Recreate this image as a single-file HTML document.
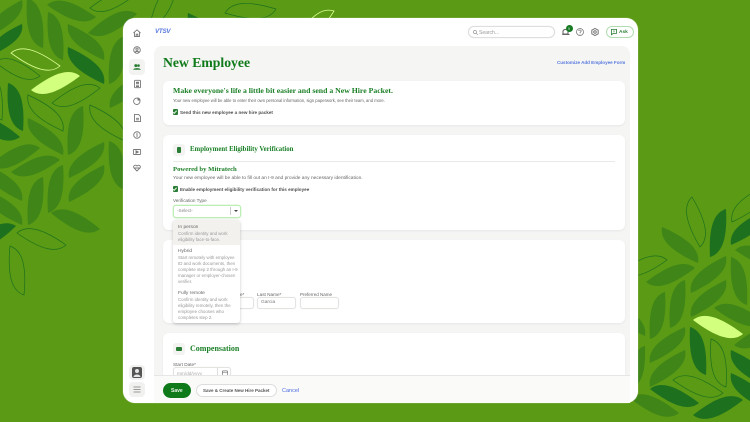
<!DOCTYPE html>
<html><head><meta charset="utf-8"><title>New Employee</title>
<style>
html,body{margin:0;padding:0;width:750px;height:422px;overflow:hidden;background:#5a9a14}
body{position:relative;font-family:"Liberation Sans",sans-serif}
.a{position:absolute;box-sizing:border-box}
.t{position:absolute;white-space:nowrap;line-height:8px;font-size:5px;color:#555}
.s{font-family:"Liberation Serif",serif;font-weight:700;color:#1a7f26}
.b{font-weight:700}
.c{position:absolute;left:163px;width:462px;background:#fff;border-radius:6px;box-shadow:0 1px 2px rgba(0,0,0,.06)}
.i{position:absolute;background:#fff;border:1px solid #e3e3e0;border-radius:3px;box-sizing:border-box;box-shadow:0 0 1px rgba(0,0,0,.1)}
.k{position:absolute;width:5.500px;height:5.500px;left:172.700px;background:#2a7d34;border-radius:1px}
.k::after{content:"";position:absolute;left:1.800px;top:.6px;width:1.300px;height:2.600px;border:solid #e8f4e8;border-width:0 .7px .7px 0;transform:rotate(45deg)}
svg.ic{position:absolute;fill:none;stroke:#777;stroke-width:.9;overflow:visible}
.d{color:#999;font-size:4.400px}
</style></head><body>
<svg class="a" style="left:0;top:0" width="750" height="422" viewBox="0 0 750 422">
<defs>
<path id="a" vector-effect="non-scaling-stroke" d="M0 0C.14-.2 .44-.22 1 0 .86.2 .56.22 0 0Z"/>
<path id="b" vector-effect="non-scaling-stroke" d="M0 0C.14.2 .44.22 1 0 .86-.2 .56-.22 0 0Z"/>
</defs>
<g fill="#3f8518">
<use href="#a" transform="matrix(32 -36 36 32 -10 36)"/>
<use href="#a" transform="matrix(16 50 -50 16 27 -2)"/>
<use href="#a" transform="matrix(15 48 -48 15 48 12)"/>
<use href="#a" transform="matrix(49 12 -12 49 47 5)"/>
<use href="#b" transform="matrix(36 36 -36 36 68 24)"/>
<use href="#b" transform="matrix(49 -19 19 49 88 33)"/>
<use href="#b" transform="matrix(16 -48 48 16 109 84)"/>
<use href="#b" transform="matrix(35 37 -37 35 28 118)"/>
<use href="#b" transform="matrix(15 -49 49 15 68 155)"/>
<use href="#b" transform="matrix(50 -17 17 50 -10 165)"/>
<use href="#b" transform="matrix(49 -12 12 49 11 172)"/>
<use href="#a" transform="matrix(35 -36 36 35 69 178)"/>
<use href="#a" transform="matrix(35 -37 37 35 69 202)"/>
<use href="#b" transform="matrix(15 -48 48 15 48 213)"/>
<use href="#b" transform="matrix(35 36 -36 35 -13 165)"/>
<use href="#b" transform="matrix(35 35 -35 35 -13 190)"/>
<use href="#b" transform="matrix(15 -48 48 15 28 225)"/>
<use href="#a" transform="matrix(49 16 -16 49 51 213)"/>
<use href="#a" transform="matrix(16 49 -49 16 109 141)"/>
<use href="#a" transform="matrix(35 -36 36 35 110 108)"/>
<use href="#b" transform="matrix(36 36 -36 36 662 227)"/>
<use href="#b" transform="matrix(49 -14 14 49 646 282)"/>
<use href="#a" transform="matrix(35 -37 37 35 691 293)"/>
<use href="#a" transform="matrix(35 -37 37 35 691 317)"/>
<use href="#a" transform="matrix(16 48 -48 16 731 257)"/>
<use href="#b" transform="matrix(15 -48 48 15 670 328)"/>
<use href="#b" transform="matrix(15 -47 47 15 650 339)"/>
<use href="#a" transform="matrix(35 -36 36 35 650 363)"/>
<use href="#a" transform="matrix(35 -37 37 35 650 387)"/>
<use href="#a" transform="matrix(51 14 -14 51 714 308)"/>
<use href="#a" transform="matrix(49 15 -15 49 630 398)"/>
<use href="#a" transform="matrix(50 12 -12 50 735 250)"/>
<use href="#b" transform="matrix(46 -15 15 46 734 345)"/>
<use href="#b" transform="matrix(15 -43 43 15 630 389)"/>
<use href="#b" transform="matrix(35 36 -36 35 610 300)"/>
</g>
<g fill="#1d701e">
<use href="#a" transform="matrix(30 -31 31 30 -8 55)"/>
<use href="#b" transform="matrix(36 37 -37 36 68 47)"/>
<use href="#a" transform="matrix(15 48 -48 15 8 83)"/>
<use href="#a" transform="matrix(50 17 -17 50 -30 120)"/>
<use href="#b" transform="matrix(46 -19 19 46 -30 245)"/>
<use href="#b" transform="matrix(37 37 -37 37 188 13)"/>
<use href="#b" transform="matrix(16 -48 48 16 710 257)"/>
<use href="#a" transform="matrix(16 48 -48 16 690 327)"/>
<use href="#b" transform="matrix(36 37 -37 36 731 350)"/>
<use href="#b" transform="matrix(36 37 -37 36 731 373)"/>
<use href="#a" transform="matrix(49 14 -14 49 650 389)"/>
<use href="#b" transform="matrix(50 -15 15 50 693 415)"/>
<use href="#a" transform="matrix(35 -35 35 35 731 245)"/>
</g>
<g fill="none" stroke="#1d701e" stroke-width=".7">
<use href="#a" transform="matrix(45 14 -14 45 -5 62)"/>
<use href="#b" transform="matrix(48 -15 15 48 52 103)"/>
<use href="#a" transform="matrix(15 48 -48 15 -13 72)"/>
<use href="#b" transform="matrix(35 36 -36 35 28 95)"/>
<use href="#b" transform="matrix(35 36 -36 35 90 105)"/>
<use href="#a" transform="matrix(49 12 -12 49 17 233)"/>
<use href="#a" transform="matrix(14 49 -49 14 10 246)"/>
<use href="#b" transform="matrix(45 -13 13 45 90 8)"/>
<use href="#b" transform="matrix(28 -40 40 28 150 24)"/>
<use href="#a" transform="matrix(51 -4 4 51 225 13)"/>
<use href="#b" transform="matrix(8 50 -50 8 692 197)"/>
<use href="#b" transform="matrix(47 -12 12 47 620 272)"/>
<use href="#a" transform="matrix(15 48 -48 15 711 339)"/>
<use href="#a" transform="matrix(50 13 -13 50 673 380)"/>
<use href="#a" transform="matrix(35 -37 37 35 732 222)"/>
</g>
<g fill="none" stroke="#dcff96" stroke-width=".8">
<use href="#a" transform="matrix(49 13 -13 49 11 53)"/>
<use href="#b" transform="matrix(39 -29 29 39 295 40)"/>
</g>
<g fill="#d2ff7e">
<use href="#b" transform="matrix(49 -14 14 49 31 90)"/>
<use href="#a" transform="matrix(50 14 -14 50 693 320)"/>
</g>
</svg>

<!-- app shell -->
<div class="a" style="left:123px;top:18px;width:515px;height:385px;background:#fff;border-radius:12px;box-shadow:0 0 1px rgba(255,255,255,.7)"></div>
<div class="a" style="left:154px;top:46px;width:476px;height:357px;background:#f5f5f4;border-radius:8px 8px 0 0"></div>

<!-- sidebar -->
<div class="a" style="left:129px;top:59px;width:16px;height:16px;background:#f3f3f1;border-radius:4px"></div>
<svg class="ic" style="left:133px;top:29px" width="8" height="8" viewBox="0 0 8 8"><path d="M.5 4 4 .8 7.500 4M1.500 3.500V7.500H6.500V3.500M3.200 7.500V5.200H4.800V7.500"/></svg>
<svg class="ic" style="left:133px;top:46px" width="8" height="8" viewBox="0 0 8 8"><circle cx="4" cy="4" r="3.300"/><circle cx="4" cy="3.200" r="1.100"/><path d="M2 6.500C2.500 5 5.500 5 6 6.500"/></svg>
<svg class="ic" style="left:133px;top:63px" width="8" height="8" viewBox="0 0 8 8"><g fill="#2a7d34" stroke="none"><circle cx="2.800" cy="2.600" r="1.500"/><circle cx="5.500" cy="2.600" r="1.300"/><path d="M.2 6.800C.4 4.500 7.600 4.500 7.800 6.800Z"/></g></svg>
<svg class="ic" style="left:134px;top:80px" width="7" height="8" viewBox="0 0 7 8"><rect x=".5" y=".3" width="6" height="7.400" rx=".8"/><rect x="2" y="1.800" width="3" height="2" fill="#777" stroke="none"/><path d="M2 5.200H5M2 6.500H5"/></svg>
<svg class="ic" style="left:133px;top:97px" width="8" height="8" viewBox="0 0 8 8"><circle cx="3.800" cy="4.300" r="3.200"/><path d="M4.500 .5A3 3 0 0 1 7.500 3.500H4.500Z" fill="#777" stroke="none"/></svg>
<svg class="ic" style="left:134px;top:114px" width="7" height="8" viewBox="0 0 7 8"><path d="M.5.4H4.500L6.500 2.400V7.600H.5ZM2 4.300H5M2 5.800H5"/></svg>
<svg class="ic" style="left:133px;top:131px" width="8" height="8" viewBox="0 0 8 8"><circle cx="4" cy="4" r="3.300"/><path d="M4 1.800V6.200"/></svg>
<svg class="ic" style="left:133px;top:148px" width="8" height="8" viewBox="0 0 8 8"><rect x=".4" y="1.500" width="7.200" height="5" rx=".6"/><path d="M3 2.800 5.300 4 3 5.200Z" fill="#777"/></svg>
<svg class="ic" style="left:133px;top:164px" width="8" height="8" viewBox="0 0 8 8"><path d="M4 7 .9 3.800C-.3 1.800 2.600 .2 4 2 5.400 .2 8.300 1.800 7.100 3.800ZM1.500 4H6.500"/></svg>
<div class="a" style="left:129px;top:365px;width:16px;height:15px;background:#f1f1ef;border-radius:4px"></div>
<svg class="a" style="left:132px;top:367px" width="10" height="11" viewBox="0 0 10 11"><rect width="10" height="11" rx="2" fill="#555"/><circle cx="5" cy="4" r="2" fill="#e5e5e5"/><path d="M1.500 10C1.800 6.700 8.200 6.700 8.500 10Z" fill="#e5e5e5"/></svg>
<div class="a" style="left:129px;top:382px;width:16px;height:15px;background:#f1f1ef;border-radius:4px"></div>
<svg class="ic" style="left:133px;top:386px;stroke:#999" width="8" height="7" viewBox="0 0 8 7"><path d="M.5 1H7.500M.5 3.500H7.500M.5 6H7.500"/></svg>

<!-- logo -->
<div class="t b" style="left:155px;top:28px;font-size:6.200px;font-style:italic;color:#5577dd;letter-spacing:-.2px">VTSV</div>

<!-- top bar -->
<div class="a" style="left:468px;top:26px;width:87px;height:12px;background:#fff;border:1px solid #dedede;border-radius:6px;box-shadow:0 0 1px rgba(0,0,0,.12)"></div>
<svg class="ic" style="left:473px;top:29.500px;stroke:#888;stroke-width:.6" width="5" height="5" viewBox="0 0 5 5"><circle cx="2" cy="2" r="1.600"/><path d="M3.200 3.200 4.800 4.800"/></svg>
<div class="t" style="left:479px;top:28.500px;color:#999">Search...</div>
<svg class="ic" style="left:562px;top:28px;stroke:#666" width="8" height="8" viewBox="0 0 8 8"><path d="M1 6V3.500C1 .8 6 .8 6 3.500V6ZM.2 6.500H7.500" stroke-width="1.100"/></svg>
<div class="a" style="left:565.500px;top:25px;width:7px;height:7px;background:#157a22;border-radius:50%"></div>
<div class="t" style="left:568px;top:24.500px;font-size:3.500px;color:#cfe8cf">9</div>
<svg class="ic" style="left:576px;top:28px;stroke-width:.8" width="8" height="8" viewBox="0 0 8 8"><circle cx="4" cy="4" r="3.500"/><path d="M2.800 3C2.800 1.700 5.200 1.700 5.200 3 5.200 3.900 4 3.900 4 5M4 5.800V6.500"/></svg>
<svg class="ic" style="left:591px;top:28px;stroke-width:1" width="8" height="8" viewBox="0 0 8 8"><path d="M4 .4 7.200 2.200V5.800L4 7.600 .8 5.800V2.200Z"/><circle cx="4" cy="4" r="1.300"/></svg>
<div class="a" style="left:606px;top:26px;width:28px;height:12px;background:#fff;border:1px solid #b0dcb0;border-radius:6px"></div>
<svg class="ic" style="left:611px;top:29px;stroke:#2a7d34;stroke-width:.8" width="6" height="6" viewBox="0 0 6 6"><path d="M.4.4H5.600V4.400H2.200L.4 5.700ZM3 1.400V3M3 3.500V3.900"/></svg>
<div class="t b" style="left:619px;top:29px;color:#2a7d34;font-size:4.800px">Ask</div>

<!-- heading -->
<div class="t s" style="left:163px;top:55px;font-size:13.700px;line-height:16px;color:#0f7a1a">New Employee</div>
<div class="t b" style="left:557px;top:59px;color:#5577dd;font-size:4.560px">Customize Add Employee Form</div>

<!-- card 1 -->
<div class="c" style="top:81px;height:44px"></div>
<div class="t s" style="left:173px;top:87px;font-size:7.750px">Make everyone's life a little bit easier and send a New Hire Packet.</div>
<div class="t" style="left:173px;top:96.500px;font-size:4.200px;color:#666">Your new employee will be able to enter their own personal information, sign paperwork, see their team, and more.</div>
<div class="k" style="top:109px"></div>
<div class="t b" style="left:180px;top:108.500px;color:#505050;font-size:4.600px">Send this new employee a new hire packet</div>

<!-- card 2 -->
<div class="c" style="top:135px;height:95px"></div>
<div class="a" style="left:173px;top:144px;width:12px;height:12px;background:#f3f3f1;border-radius:3px"></div>
<div class="a" style="left:177px;top:147px;width:4px;height:6px;background:#2a7d34;border-radius:1px"></div>
<div class="t s" style="left:190px;top:146px;font-size:6.800px">Employment Eligibility Verification</div>
<div class="a" style="left:173px;top:161px;width:442px;height:1px;background:#e9e9e7"></div>
<div class="t s" style="left:173px;top:166px;font-size:6.700px">Powered by Mitratech</div>
<div class="t" style="left:173px;top:174.500px;font-size:4.850px;color:#666">Your new employee will be able to fill out an I-9 and provide any necessary identification.</div>
<div class="k" style="top:186.300px"></div>
<div class="t b" style="left:180px;top:185.500px;color:#505050;font-size:4.580px">Enable employment eligibility verification for this employee</div>
<div class="t" style="left:173px;top:197px;color:#666;font-size:4.600px">Verification Type</div>
<div class="a" style="left:173px;top:205px;width:68px;height:12.500px;background:#fff;border:1px solid #bdeeb5;border-radius:3px;box-shadow:0 0 0 .5px #d5f5cf"></div>
<div class="t" style="left:177px;top:207px;color:#888;font-size:4.600px">-Select-</div>
<div class="a" style="left:230px;top:207px;width:1px;height:8px;background:#ccc"></div>
<div class="a" style="left:234px;top:210px;width:0;height:0;border-left:2px solid transparent;border-right:2px solid transparent;border-top:2.500px solid #444"></div>

<!-- card 3 -->
<div class="c" style="top:240px;height:83px"></div>
<div class="t" style="left:240px;top:290.500px;color:#666;font-size:4.600px">e*</div>
<div class="i" style="left:225px;top:297px;width:29px;height:12px"></div>
<div class="t" style="left:257px;top:290.500px;color:#666;font-size:4.700px">Last Name*</div>
<div class="i" style="left:257px;top:297px;width:39px;height:12px"></div>
<div class="t" style="left:261px;top:299px;color:#777;font-size:4.800px">Garcia</div>
<div class="t" style="left:300px;top:290.500px;color:#666;font-size:4.500px">Preferred Name</div>
<div class="i" style="left:300px;top:297px;width:39px;height:12px"></div>

<!-- dropdown -->
<div class="a" style="left:173px;top:220px;width:67px;height:103px;background:#fff;border-radius:3px;box-shadow:0 1px 3px rgba(0,0,0,.22)"></div>
<div class="a" style="left:173px;top:220px;width:67px;height:25px;background:#f2f1ee;border-radius:3px 3px 0 0"></div>
<div class="t" style="left:178px;top:224px;font-size:4.900px;color:#666">In person</div>
<div class="t d" style="left:178px;top:230px">Confirm identity and work</div>
<div class="t d" style="left:178px;top:236px">eligibility face-to-face.</div>
<div class="t" style="left:178px;top:248px;font-size:4.900px;color:#666">Hybrid</div>
<div class="t d" style="left:178px;top:254px">Start remotely with employee</div>
<div class="t d" style="left:178px;top:260px">ID and work documents, then</div>
<div class="t d" style="left:178px;top:266px">complete step 2 through an I-9</div>
<div class="t d" style="left:178px;top:272px">manager or employer-chosen</div>
<div class="t d" style="left:178px;top:278px">verifier.</div>
<div class="t" style="left:178px;top:290px;font-size:4.900px;color:#666">Fully remote</div>
<div class="t d" style="left:178px;top:296px">Confirm identity and work</div>
<div class="t d" style="left:178px;top:302px">eligibility remotely, then the</div>
<div class="t d" style="left:178px;top:308px">employee chooses who</div>
<div class="t d" style="left:178px;top:313.500px">completes step 2.</div>

<!-- card 4 -->
<div class="c" style="top:333px;height:60px"></div>
<div class="a" style="left:173px;top:343px;width:12px;height:12px;background:#f3f3f1;border-radius:3px"></div>
<div class="a" style="left:176px;top:347px;width:6px;height:4px;background:#2a7d34;border-radius:1px"></div>
<div class="t s" style="left:190px;top:345px;font-size:8px">Compensation</div>
<div class="t" style="left:173px;top:360.500px;color:#666;font-size:4.700px">Start Date*</div>
<div class="i" style="left:173px;top:367px;width:58px;height:14px"></div>
<div class="t" style="left:177px;top:370px;color:#aaa;font-size:4.700px">mm/dd/yyyy</div>
<div class="a" style="left:217px;top:368px;width:1px;height:10px;background:#ddd"></div>
<svg class="ic" style="left:222px;top:370px;stroke-width:.7" width="6" height="6" viewBox="0 0 6 6"><rect x=".4" y=".8" width="5.200" height="4.800" rx=".6"/><path d="M.4 2.200H5.600"/></svg>

<!-- footer -->
<div class="a" style="left:154px;top:375px;width:476px;height:28px;background:#fafaf9;border-top:1px solid #e6e6e4"></div>
<div class="a" style="left:163px;top:383px;width:28px;height:14.500px;background:#0f7a1a;border-radius:8px"></div>
<div class="t b" style="left:171px;top:386.500px;color:#e8f4e8;font-size:5px">Save</div>
<div class="a" style="left:196px;top:384px;width:81px;height:13px;background:#fff;border:1px solid #ddd;border-radius:7px"></div>
<div class="t b" style="left:203px;top:386.500px;color:#555;font-size:4.500px">Save &amp; Create New Hire Packet</div>
<div class="t" style="left:282px;top:386.500px;color:#4a6be0;font-size:5.500px">Cancel</div>
</body></html>
